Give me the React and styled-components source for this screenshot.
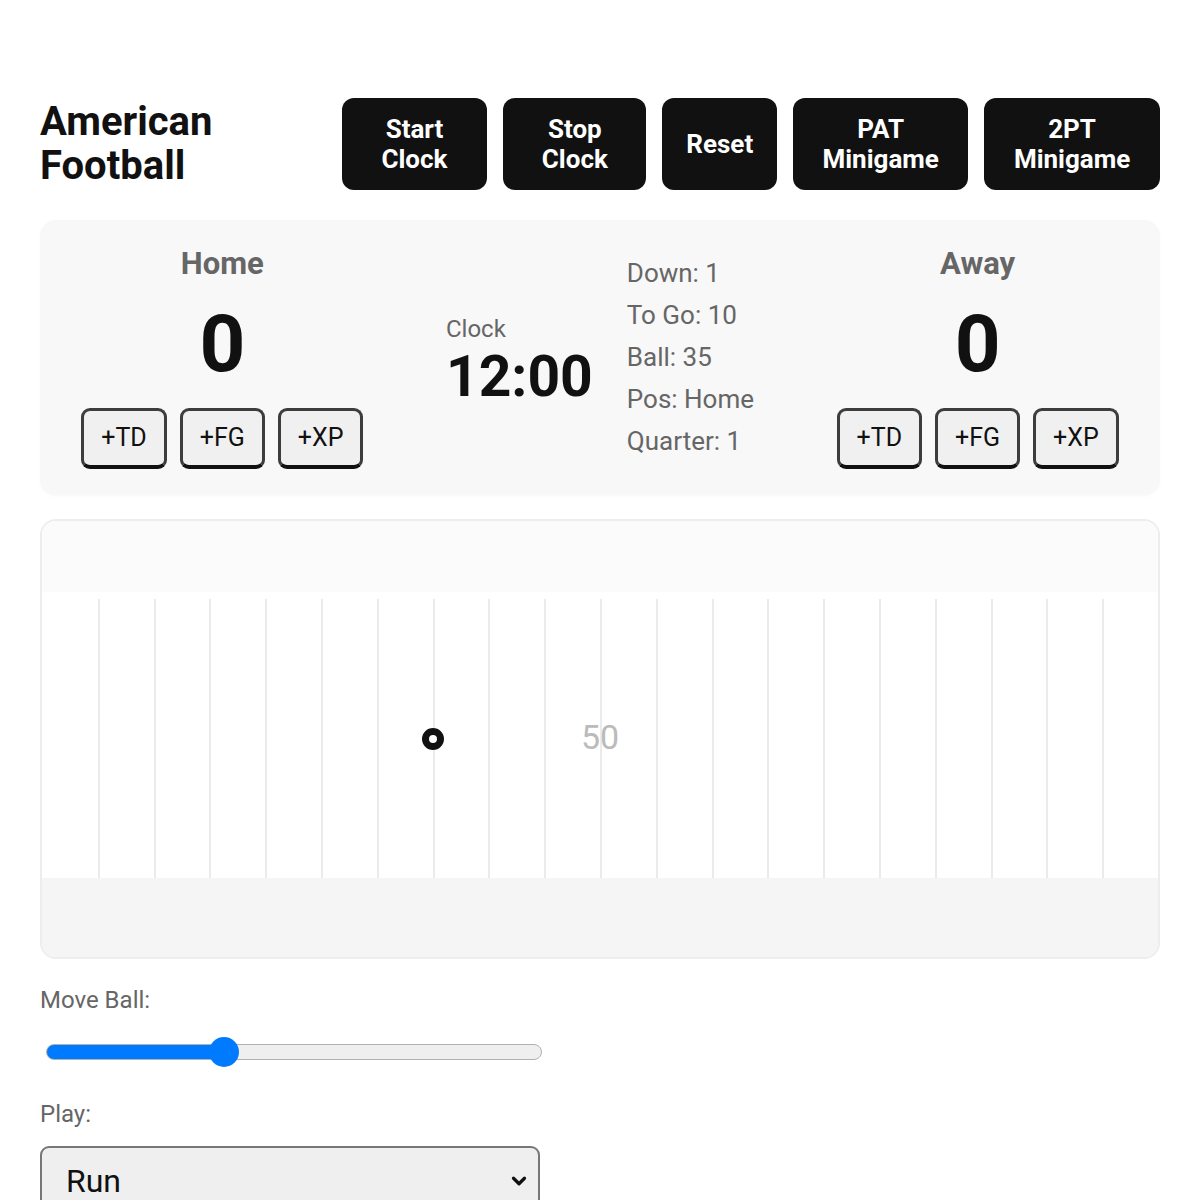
import React, { useState } from "react";
import styled, { createGlobalStyle } from "styled-components";
import { ChevronDown } from "lucide-react";

const GlobalStyle = createGlobalStyle`
  body {
    margin: 0;
    background: #fff;
    font-family: Roboto, "Liberation Sans", Arial, sans-serif;
    color: #111;
  }
`;

const Page = styled.div`
  padding: 98px 40px 40px;
`;

const Header = styled.header`
  display: flex;
  align-items: center;
  justify-content: space-between;
  gap: 24px;
  margin-bottom: 30px;
`;

const Title = styled.h1`
  margin: 0;
  font-size: 40px;
  line-height: 44px;
  font-weight: 700;
  color: #111;
`;

const ButtonRow = styled.div`
  display: flex;
  gap: 16px;
`;

const ActionButton = styled.button`
  background: #111;
  color: #fff;
  border: none;
  border-radius: 12px;
  padding: 16px 24px;
  font-family: inherit;
  font-size: 26px;
  line-height: 30px;
  font-weight: 700;
  cursor: pointer;
`;

const Scoreboard = styled.section`
  display: flex;
  align-items: center;
  justify-content: space-around;
  background: #f8f8f8;
  border-radius: 16px;
  padding: 25px 0 26px;
  margin-bottom: 24px;
  box-shadow: 0 1px 3px rgba(0, 0, 0, 0.03);
`;

const Team = styled.div`
  display: flex;
  flex-direction: column;
  align-items: center;
`;

const TeamName = styled.h2`
  margin: 0 0 22px;
  font-size: 31px;
  line-height: 37px;
  font-weight: 700;
  color: #666;
`;

const Score = styled.div`
  font-size: 80px;
  line-height: 80px;
  font-weight: 700;
  color: #111;
  margin-bottom: 24px;
`;

const ScoreButtons = styled.div`
  display: flex;
  gap: 13px;
`;

const ScoreButton = styled.button`
  background: #f0f0f0;
  color: #111;
  border: 3px solid #3d3d3d;
  border-bottom: 4px solid #111;
  border-radius: 9px;
  padding: 13px 17px;
  font-family: inherit;
  font-size: 25px;
  line-height: 28px;
  font-weight: 400;
  cursor: pointer;
`;

const Middle = styled.div`
  display: flex;
  align-items: center;
  gap: 34px;
`;

const ClockBox = styled.div`
  display: flex;
  flex-direction: column;
  padding-top: 10px;
`;

const ClockLabel = styled.div`
  font-size: 24px;
  color: #666;
`;

const ClockTime = styled.div`
  font-size: 57px;
  font-weight: 700;
  color: #111;
`;

const Info = styled.div`
  display: flex;
  flex-direction: column;
`;

const InfoLine = styled.div`
  font-size: 26px;
  line-height: 42px;
  color: #666;
`;

const Field = styled.div`
  height: 436px;
  border: 2px solid #ededed;
  border-radius: 16px;
  overflow: hidden;
  display: flex;
  flex-direction: column;
  margin-bottom: 27px;
`;

const TopBand = styled.div`
  height: 78px;
  background: linear-gradient(#fbfbfb 0 71px, #fff 71px);
`;

const BottomBand = styled.div`
  flex: 1;
  background: #f5f5f5;
`;

const Yards = styled.div`
  position: relative;
  height: 279px;
  display: grid;
  grid-template-columns: repeat(20, 1fr);
  background: #fff;
`;

const YardCell = styled.div`
  border-left: ${(p) => (p.$first ? "none" : "2px solid #ebebeb")};
`;

const YardNumber = styled.div`
  position: absolute;
  left: 50%;
  top: 50%;
  transform: translate(-50%, -55%);
  font-size: 34px;
  color: #bbb;
`;

const Ball = styled.div`
  position: absolute;
  top: 50%;
  width: 8px;
  height: 8px;
  border: 7px solid #111;
  border-radius: 50%;
  background: #fff;
  transform: translate(-50%, -50%);
`;

const Label = styled.label`
  display: block;
  font-size: 24px;
  line-height: 29px;
  color: #666;
  margin-bottom: ${(p) => p.$gap || "22px"};
`;

const Slider = styled.input`
  -webkit-appearance: none;
  appearance: none;
  display: block;
  width: 496px;
  height: 30px;
  margin: 0 0 33px 6px;
  background: transparent;
  cursor: pointer;

  &::-webkit-slider-runnable-track {
    height: 16px;
    border-radius: 8px;
    box-sizing: border-box;
    border: 1px solid #b0b0b0;
    background: linear-gradient(
      to right,
      #007bff calc(15px + (100% - 30px) * var(--pct)),
      #efefef calc(15px + (100% - 30px) * var(--pct))
    );
  }

  &::-webkit-slider-thumb {
    -webkit-appearance: none;
    width: 30px;
    height: 30px;
    margin-top: -8px;
    border-radius: 50%;
    background: #007bff;
    border: none;
  }
`;

const SelectWrap = styled.div`
  position: relative;
  width: 500px;

  svg {
    position: absolute;
    right: 10px;
    top: 50%;
    transform: translateY(-50%);
    pointer-events: none;
  }
`;

const Select = styled.select`
  -webkit-appearance: none;
  appearance: none;
  display: block;
  width: 100%;
  padding: 14px 24px;
  font-family: inherit;
  font-size: 32px;
  color: #111;
  background: #efefef;
  border: 2px solid #777;
  border-radius: 9px;
`;

export default function App() {
  const [ball, setBall] = useState(35);
  const yardLines = Array.from({ length: 20 }, (_, i) => i);

  const team = (name) => (
    <Team>
      <TeamName>{name}</TeamName>
      <Score>0</Score>
      <ScoreButtons>
        <ScoreButton>+TD</ScoreButton>
        <ScoreButton>+FG</ScoreButton>
        <ScoreButton>+XP</ScoreButton>
      </ScoreButtons>
    </Team>
  );

  return (
    <>
      <GlobalStyle />
      <Page>
        <Header>
          <Title>American Football</Title>
          <ButtonRow>
            <ActionButton>Start Clock</ActionButton>
            <ActionButton>Stop Clock</ActionButton>
            <ActionButton>Reset</ActionButton>
            <ActionButton>PAT Minigame</ActionButton>
            <ActionButton>2PT Minigame</ActionButton>
          </ButtonRow>
        </Header>

        <Scoreboard>
          {team("Home")}
          <Middle>
            <ClockBox>
              <ClockLabel>Clock</ClockLabel>
              <ClockTime>12:00</ClockTime>
            </ClockBox>
            <Info>
              <InfoLine>Down: 1</InfoLine>
              <InfoLine>To Go: 10</InfoLine>
              <InfoLine>Ball: {ball}</InfoLine>
              <InfoLine>Pos: Home</InfoLine>
              <InfoLine>Quarter: 1</InfoLine>
            </Info>
          </Middle>
          {team("Away")}
        </Scoreboard>

        <Field>
          <TopBand />
          <Yards>
            {yardLines.map((i) => (
              <YardCell key={i} $first={i === 0} />
            ))}
            <YardNumber>50</YardNumber>
            <Ball style={{ left: `${ball}%` }} />
          </Yards>
          <BottomBand />
        </Field>

        <Label htmlFor="move">Move Ball:</Label>
        <Slider
          id="move"
          type="range"
          min="0"
          max="100"
          value={ball}
          onChange={(e) => setBall(Number(e.target.value))}
          style={{ "--pct": ball / 100 }}
        />

        <Label htmlFor="play" $gap="17px">Play:</Label>
        <SelectWrap>
          <Select id="play" defaultValue="Run">
            <option>Run</option>
            <option>Pass</option>
            <option>Punt</option>
            <option>Field Goal</option>
          </Select>
          <ChevronDown size={22} strokeWidth={3.5} color="#111" />
        </SelectWrap>
      </Page>
    </>
  );
}
